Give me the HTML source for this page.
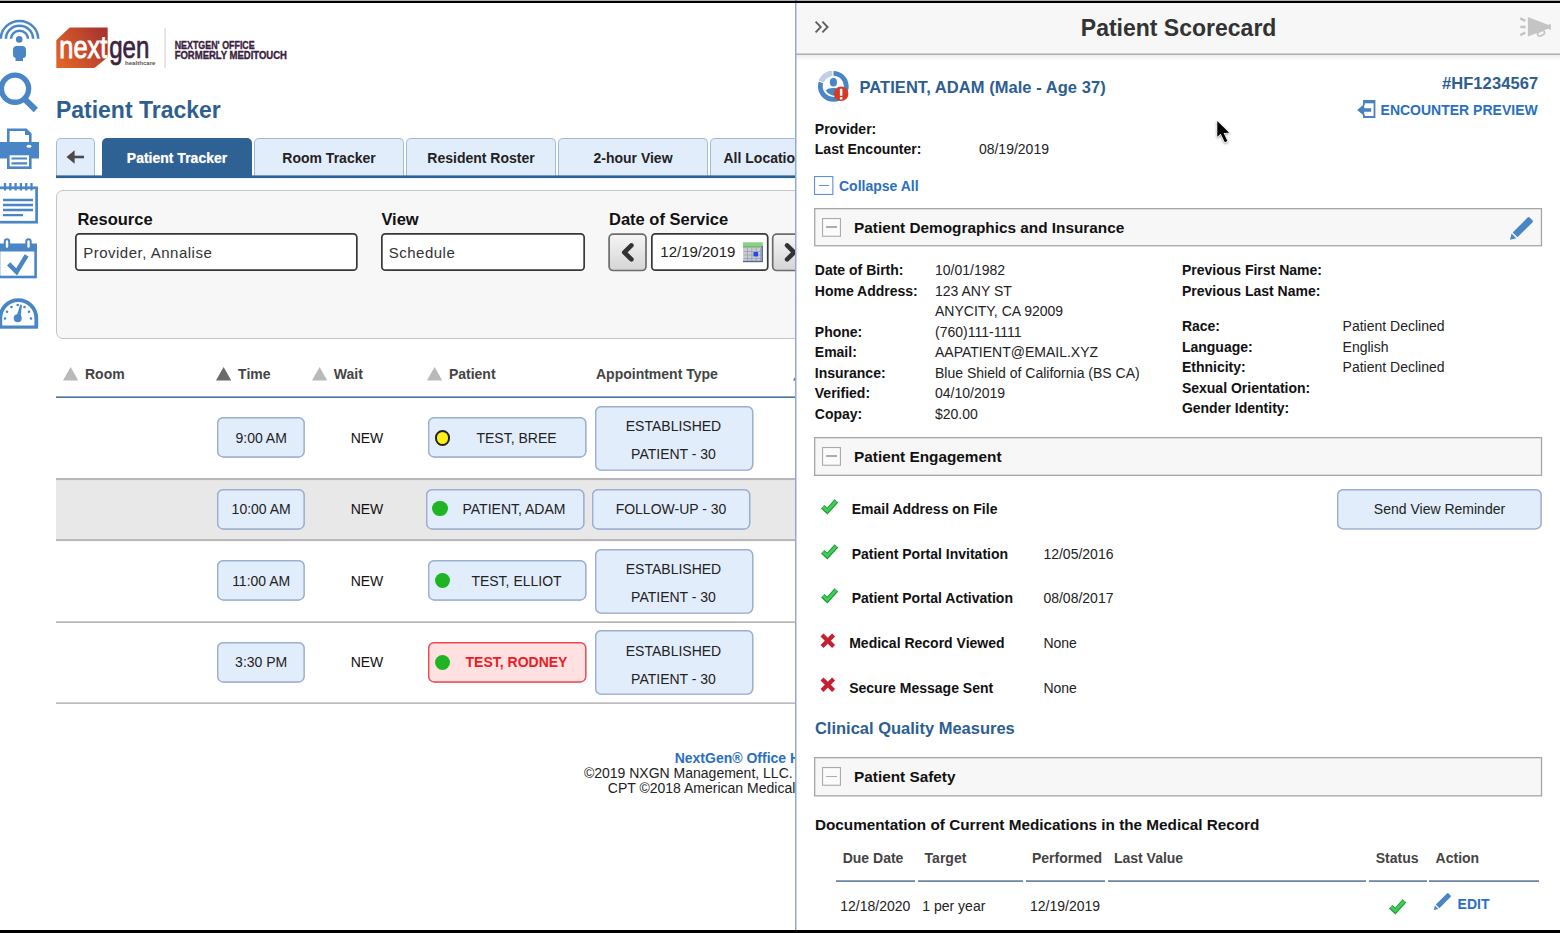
<!DOCTYPE html>
<html lang="en"><head><meta charset="utf-8"><title>Patient Tracker - Patient Scorecard</title>
<style>
html,body{margin:0;padding:0;}
body{width:1560px;height:933px;overflow:hidden;background:#fff;position:relative;font-family:"Liberation Sans",sans-serif;}
.t{position:absolute;white-space:nowrap;margin:0;padding:0;}
.b{position:absolute;box-sizing:border-box;}
svg{position:absolute;overflow:visible;}
#left{position:absolute;left:0;top:0;width:795px;height:933px;overflow:hidden;background:#fff;}
#right{position:absolute;left:795px;top:0;width:765px;height:933px;overflow:hidden;background:#fff;}
.btn{background:#e2edfb;border:1px solid #9fb4d2;border-radius:6px;box-shadow:0 1px 1px rgba(120,140,170,.35);}
.sec{background:#f7f7f7;border:1px solid #a6a6a6;box-shadow:0 0 0 .5px #b8b8b8;}
.mn{background:#fbfbfb;border:1px solid #aaa;}
</style></head><body>

<div id="left">
<svg width="42" height="340" style="left:0;top:0" viewBox="0 0 42 340">
<g fill="none" stroke="#4a86c6" stroke-width="2.5">
<path d="M0.800,38.800 A18.700,17.900 0 0 1 38.200,38.800"/>
<path d="M5.900,38.800 A13.600,13 0 0 1 33.100,38.800"/>
<path d="M11,38.800 A8.500,8.100 0 0 1 28,38.800"/>
</g>
<circle cx="19.2" cy="39.4" r="3.3" fill="#4a86c6"/>
<path d="M13,50 a4,4 0 0 1 4,-4 h5 a4,4 0 0 1 4,4 v5 a3,3 0 0 1 -3,3 v3 h-7.5 v-3 a3,3 0 0 1 -2.500,-3 z" fill="#4a86c6"/>
<circle cx="15" cy="88.7" r="13.6" fill="none" stroke="#4a86c6" stroke-width="5.4"/>
<path d="M24,98.500 L35.800,110" stroke="#4a86c6" stroke-width="6" fill="none"/>
<!-- printer -->
<path d="M8.300,142 V129.700 H26 L30.300,134 V142" fill="#fff" stroke="#4a86c6" stroke-width="2.600"/>
<path d="M25,128.400 V135 H31.500 Z" fill="#4a86c6"/>
<rect x="0" y="142" width="39" height="16.500" fill="#4a86c6"/>
<ellipse cx="29" cy="146.300" rx="2.600" ry="1.500" fill="#fff"/>
<rect x="8.300" y="154" width="22" height="13.700" fill="#fff" stroke="#4a86c6" stroke-width="2.600"/>
<path d="M11.500,158.500 H27 M11.500,163.300 H27" stroke="#4a86c6" stroke-width="2.200"/>
<!-- notepad -->
<rect x="-2" y="187.800" width="38.600" height="34.400" fill="#fff" stroke="#4a86c6" stroke-width="2.700"/>
<path d="M5,183 V190.500 M10.300,183 V190.500 M15.600,183 V190.500 M20.900,183 V190.500 M26.200,183 V190.500 M31.500,183 V190.500" stroke="#4a86c6" stroke-width="2.300"/>
<path d="M3,200 H33 M3,205 H33 M3,210 H33 M3,215.200 H23" stroke="#4a86c6" stroke-width="2.300"/>
<!-- calendar check -->
<rect x="-1" y="245" width="36.600" height="32" fill="#fff" stroke="#4a86c6" stroke-width="2.600"/>
<rect x="-1" y="243.700" width="37.900" height="7.800" fill="#4a86c6"/>
<rect x="4.800" y="239.300" width="4.400" height="9.500" rx="2.200" fill="#fff" stroke="#4a86c6" stroke-width="2"/>
<rect x="26.300" y="239.300" width="4.400" height="9.500" rx="2.200" fill="#fff" stroke="#4a86c6" stroke-width="2"/>
<path d="M8.600,263.800 L16.600,271.800 L26.600,255.300" fill="none" stroke="#4a86c6" stroke-width="4.500"/>
<!-- gauge -->
<path d="M0.300,327 V318.300 A18,18.200 0 0 1 36.300,318.300 V327" fill="none" stroke="#4a86c6" stroke-width="3.800"/>
<rect x="-1" y="325.500" width="39" height="3.200" fill="#4a86c6"/>
<circle cx="17.700" cy="318.300" r="4" fill="#4a86c6"/>
<path d="M16,318 L20.300,304.600 L22,305 L20.300,319 Z" fill="#4a86c6"/>
<g fill="#4a86c6"><circle cx="5" cy="318.500" r="1.300"/><circle cx="7" cy="311.800" r="1.300"/><circle cx="11.500" cy="307" r="1.300"/><circle cx="17.700" cy="305" r="1.300"/><circle cx="24.500" cy="307" r="1.300"/><circle cx="29" cy="311.800" r="1.300"/><circle cx="31" cy="318.500" r="1.300"/></g>
</svg>
<svg width="260" height="60" style="left:50px;top:20px" viewBox="50 20 260 60">
<defs><linearGradient id="lg" x1="0" y1="0.750" x2="1" y2="0.250"><stop offset="0" stop-color="#e06429"/><stop offset="0.500" stop-color="#c74c2c"/><stop offset="1" stop-color="#a7352f"/></linearGradient></defs>
<path d="M56.300,40.200 L69.600,27.600 H107.700 V57.200 L94.400,67.900 H56.300 Z" fill="url(#lg)"/>
<text x="59.300" y="58.300" font-family="Liberation Sans, sans-serif" font-size="32" fill="#fff" stroke="#fff" stroke-width=".9" textLength="48" lengthAdjust="spacingAndGlyphs">next</text>
<text x="109.200" y="58.300" font-family="Liberation Sans, sans-serif" font-size="32" fill="#3d2140" stroke="#3d2140" stroke-width=".7" textLength="40.200" lengthAdjust="spacingAndGlyphs">gen</text>
<text x="125" y="64.600" font-family="Liberation Sans, sans-serif" font-size="5" font-weight="bold" fill="#555" textLength="30.500" lengthAdjust="spacingAndGlyphs">healthcare</text>
<rect x="164.600" y="27.800" width="1" height="40" fill="#d0d0d0"/>
<text x="174.700" y="48.800" font-family="Liberation Sans, sans-serif" font-size="10.400" font-weight="bold" fill="#3a2140" stroke="#3a2140" stroke-width=".35" textLength="80" lengthAdjust="spacingAndGlyphs">NEXTGEN' OFFICE</text>
<text x="174.700" y="58.700" font-family="Liberation Sans, sans-serif" font-size="10.400" font-weight="bold" fill="#3a2140" stroke="#3a2140" stroke-width=".35" textLength="112.200" lengthAdjust="spacingAndGlyphs">FORMERLY MEDITOUCH</text>
</svg>
<div class="t" style="left:55.90px;top:95px;font-size:23px;line-height:30px;color:#2e5f90;font-weight:bold;">Patient Tracker</div>
<div class="b" style="left:56.00px;top:138.00px;width:38.50px;height:38.00px;background:#e2edfb;border:1px solid #a3b9d6;border-bottom:none;border-radius:5px 5px 0 0;"></div>
<div class="b" style="left:102.00px;top:137.60px;width:150.00px;height:38.40px;background:#2e6295;border-radius:5px 5px 0 0;"></div>
<div class="b" style="left:254.00px;top:138.00px;width:150.00px;height:38.00px;background:#e2edfb;border:1px solid #a3b9d6;border-bottom:none;border-radius:5px 5px 0 0;"></div>
<div class="b" style="left:406.00px;top:138.00px;width:150.00px;height:38.00px;background:#e2edfb;border:1px solid #a3b9d6;border-bottom:none;border-radius:5px 5px 0 0;"></div>
<div class="b" style="left:558.00px;top:138.00px;width:150.00px;height:38.00px;background:#e2edfb;border:1px solid #a3b9d6;border-bottom:none;border-radius:5px 5px 0 0;"></div>
<div class="b" style="left:710.00px;top:138.00px;width:150.00px;height:38.00px;background:#e2edfb;border:1px solid #a3b9d6;border-bottom:none;border-radius:5px 5px 0 0;"></div>
<svg width="800" height="4" style="left:0;top:175px" viewBox="0 175 800 4"><rect x="56" y="175.400" width="744" height="2.700" fill="#2e6295"/></svg>
<svg width="20" height="16" style="left:65px;top:149px" viewBox="65 149 20 16"><path d="M69,157 H84" stroke="#4a4a4a" stroke-width="2.600" fill="none"/><path d="M66.500,157 L74.600,150.200 V163.800 Z" fill="#4a4a4a"/></svg>
<div class="t" style="left:-23.00px;width:400px;text-align:center;top:148px;font-size:14px;line-height:20px;color:#fff;font-weight:bold;text-shadow:0 0 1px rgba(255,255,255,.6);">Patient Tracker</div>
<div class="t" style="left:129.00px;width:400px;text-align:center;top:148px;font-size:14px;line-height:20px;color:#222;font-weight:bold;">Room Tracker</div>
<div class="t" style="left:281.00px;width:400px;text-align:center;top:148px;font-size:14px;line-height:20px;color:#222;font-weight:bold;">Resident Roster</div>
<div class="t" style="left:433.00px;width:400px;text-align:center;top:148px;font-size:14px;line-height:20px;color:#222;font-weight:bold;">2-hour View</div>
<div class="t" style="left:723.50px;top:148px;font-size:14px;line-height:20px;color:#222;font-weight:bold;">All Locations</div>
<div class="b" style="left:56.00px;top:190.00px;width:844.00px;height:148.50px;background:#f7f7f7;border:1px solid #c4c4c4;border-radius:7px;"></div>
<div class="t" style="left:77.40px;top:209px;font-size:16.5px;line-height:20px;color:#111;font-weight:bold;">Resource</div>
<div class="t" style="left:381.40px;top:209px;font-size:16.5px;line-height:20px;color:#111;font-weight:bold;">View</div>
<div class="t" style="left:609.00px;top:209px;font-size:16.5px;line-height:20px;color:#111;font-weight:bold;">Date of Service</div>
<svg width="286.70" height="42.00" style="left:73.00px;top:231.30px;" viewBox="73.00 231.30 286.70 42.00"><rect x="75.85" y="234.15" width="281.00" height="36.30" rx="3.5" fill="#fff" stroke="#383838" stroke-width="1.7"/></svg>
<svg width="208.00" height="42.00" style="left:379.00px;top:231.30px;" viewBox="379.00 231.30 208.00 42.00"><rect x="381.85" y="234.15" width="202.30" height="36.30" rx="3.5" fill="#fff" stroke="#383838" stroke-width="1.7"/></svg>
<div class="t" style="left:83.20px;top:243px;font-size:15px;line-height:20px;color:#333;letter-spacing:.5px;">Provider, Annalise</div>
<div class="t" style="left:388.70px;top:243px;font-size:15px;line-height:20px;color:#333;letter-spacing:.5px;">Schedule</div>
<svg width="200" height="46" style="left:604px;top:230px" viewBox="604 230 200 46"><defs><linearGradient id="bg1" x1="0" y1="0" x2="0" y2="1"><stop offset="0" stop-color="#f6f6f6"/><stop offset="1" stop-color="#d4d4d4"/></linearGradient></defs><rect x="609.100" y="234.200" width="36.900" height="36.300" rx="4" fill="url(#bg1)" stroke="#6c6c6c" stroke-width="1.700"/><rect x="772.700" y="234.200" width="36.900" height="36.300" rx="4" fill="url(#bg1)" stroke="#6c6c6c" stroke-width="1.700"/></svg>
<svg width="121.60" height="42.00" style="left:648.60px;top:231.30px;" viewBox="648.60 231.30 121.60 42.00"><rect x="651.45" y="234.15" width="115.90" height="36.30" rx="3.5" fill="#fff" stroke="#383838" stroke-width="1.7"/></svg>
<svg width="200" height="50" style="left:600px;top:228px" viewBox="600 228 200 50"><path d="M631.400,245.400 L624.300,252.400 L631.400,259.400" fill="none" stroke="#333" stroke-width="4.600" stroke-linecap="round" stroke-linejoin="round"/><path d="M787.100,245.400 L794.200,252.400 L787.100,259.400" fill="none" stroke="#333" stroke-width="4.600" stroke-linecap="round" stroke-linejoin="round"/><g><rect x="743" y="242.400" width="19.800" height="19.600" fill="#c9ccd2"/><rect x="743" y="242.400" width="19.800" height="4.200" fill="#86d486"/><rect x="743" y="246.400" width="19.800" height="1" fill="#5aa85a"/><path d="M747.500,248 V261 M751.800,248 V261 M756.200,248 V261 M760.500,248 V261 M744,251.500 H762 M744,255 H762 M744,258.500 H762" stroke="#9aa0b0" stroke-width=".8"/><rect x="753.500" y="252" width="4.600" height="4.400" fill="#2448e8"/><rect x="743" y="260.800" width="19.800" height="1.400" fill="#56679c"/><rect x="761.600" y="246" width="1.300" height="16" fill="#56679c"/></g></svg>
<div class="t" style="left:660.30px;top:242px;font-size:15px;line-height:20px;color:#222;">12/19/2019</div>
<svg width="16" height="14" style="left:62.6px;top:367px" viewBox="0 0 16 14"><path d="M0,13.600 L7.600,0 L15.200,13.600 Z" fill="#b9b9b9"/></svg>
<div class="t" style="left:85.00px;top:364px;font-size:14px;line-height:20px;color:#444;font-weight:bold;">Room</div>
<svg width="16" height="14" style="left:216.2px;top:367px" viewBox="0 0 16 14"><path d="M0,13.600 L7.600,0 L15.200,13.600 Z" fill="#6a6a6a"/></svg>
<div class="t" style="left:238.10px;top:364px;font-size:14px;line-height:20px;color:#444;font-weight:bold;">Time</div>
<svg width="16" height="14" style="left:312.2px;top:367px" viewBox="0 0 16 14"><path d="M0,13.600 L7.600,0 L15.200,13.600 Z" fill="#b9b9b9"/></svg>
<div class="t" style="left:333.80px;top:364px;font-size:14px;line-height:20px;color:#444;font-weight:bold;">Wait</div>
<svg width="16" height="14" style="left:427px;top:367px" viewBox="0 0 16 14"><path d="M0,13.600 L7.600,0 L15.200,13.600 Z" fill="#b9b9b9"/></svg>
<div class="t" style="left:448.90px;top:364px;font-size:14px;line-height:20px;color:#444;font-weight:bold;">Patient</div>
<div class="t" style="left:596.00px;top:364px;font-size:14px;line-height:20px;color:#444;font-weight:bold;">Appointment Type</div>
<svg width="16" height="14" style="left:793px;top:367px" viewBox="0 0 16 14"><path d="M0,13.600 L7.600,0 L15.200,13.600 Z" fill="#6a6a6a"/></svg>
<div class="b" style="left:56.00px;top:396.00px;width:744.00px;height:2.00px;background:linear-gradient(#b9d0ea,#56789f 55%,#4a6a94);"></div>
<svg width="800" height="66" style="left:0;top:476px" viewBox="0 476 800 66"><rect x="56" y="479" width="744" height="61" fill="#e8e8e8"/><rect x="56" y="478" width="744" height="2.100" fill="#b6b6b6"/><rect x="56" y="539.100" width="744" height="2" fill="#b6b6b6"/></svg>
<div class="b" style="left:56.00px;top:621.00px;width:744.00px;height:2.00px;background:linear-gradient(#d6d6d6,#b8b8b8 60%,#b4b4b4);"></div>
<div class="b" style="left:56.00px;top:702.00px;width:744.00px;height:2.00px;background:linear-gradient(#dcdcdc,#bdbdbd 60%,#bababa);"></div>
<svg width="91.80" height="44.70" style="left:215.20px;top:415.30px;filter:drop-shadow(0 .8px .6px rgba(110,130,165,.45));" viewBox="215.20 415.30 91.80 44.70"><rect x="217.90" y="418.00" width="86.40" height="39.30" rx="5.5" fill="#e2edfb" stroke="#9bb0cf" stroke-width="1.4"/></svg>
<div class="t" style="left:61.20px;width:400px;text-align:center;top:428px;font-size:14px;line-height:20px;color:#222;">9:00 AM</div>
<div class="t" style="left:167.00px;width:400px;text-align:center;top:428px;font-size:14px;line-height:20px;color:#111;">NEW</div>
<svg width="162.50" height="44.70" style="left:426.00px;top:415.30px;filter:drop-shadow(0 .8px .6px rgba(110,130,165,.45));" viewBox="426.00 415.30 162.50 44.70"><rect x="428.70" y="418.00" width="157.10" height="39.30" rx="5.5" fill="#e2edfb" stroke="#9bb0cf" stroke-width="1.4"/></svg>
<div class="b" style="left:434.90px;top:430.10px;width:15.600px;height:15.600px;border-radius:50%;background:#ffef1a;border:2px solid #222;"></div>
<div class="t" style="left:316.50px;width:400px;text-align:center;top:428px;font-size:14px;line-height:20px;color:#222;">TEST, BREE</div>
<svg width="162.40" height="68.80" style="left:592.50px;top:403.70px;filter:drop-shadow(0 .8px .6px rgba(110,130,165,.45));" viewBox="592.50 403.70 162.40 68.80"><rect x="595.20" y="406.40" width="157.00" height="63.40" rx="5.5" fill="#e2edfb" stroke="#9bb0cf" stroke-width="1.4"/></svg>
<div class="t" style="left:473.50px;width:400px;text-align:center;top:416px;font-size:14px;line-height:20px;color:#222;">ESTABLISHED</div>
<div class="t" style="left:473.50px;width:400px;text-align:center;top:444px;font-size:14px;line-height:20px;color:#222;">PATIENT - 30</div>
<svg width="91.80" height="44.70" style="left:215.20px;top:486.50px;filter:drop-shadow(0 .8px .6px rgba(110,130,165,.45));" viewBox="215.20 486.50 91.80 44.70"><rect x="217.90" y="489.20" width="86.40" height="39.30" rx="5.5" fill="#e2edfb" stroke="#9bb0cf" stroke-width="1.4"/></svg>
<div class="t" style="left:61.20px;width:400px;text-align:center;top:499px;font-size:14px;line-height:20px;color:#222;">10:00 AM</div>
<div class="t" style="left:167.00px;width:400px;text-align:center;top:499px;font-size:14px;line-height:20px;color:#111;">NEW</div>
<svg width="162.50" height="44.70" style="left:423.50px;top:486.50px;filter:drop-shadow(0 .8px .6px rgba(110,130,165,.45));" viewBox="423.50 486.50 162.50 44.70"><rect x="426.20" y="489.20" width="157.10" height="39.30" rx="5.5" fill="#e2edfb" stroke="#9bb0cf" stroke-width="1.4"/></svg>
<div class="b" style="left:432.40px;top:501.30px;width:15.200px;height:15.200px;border-radius:50%;background:#1fb522;"></div>
<div class="t" style="left:314.00px;width:400px;text-align:center;top:499px;font-size:14px;line-height:20px;color:#222;">PATIENT, ADAM</div>
<svg width="162.40" height="44.70" style="left:590.00px;top:486.50px;filter:drop-shadow(0 .8px .6px rgba(110,130,165,.45));" viewBox="590.00 486.50 162.40 44.70"><rect x="592.70" y="489.20" width="157.00" height="39.30" rx="5.5" fill="#e2edfb" stroke="#9bb0cf" stroke-width="1.4"/></svg>
<div class="t" style="left:471.00px;width:400px;text-align:center;top:499px;font-size:14px;line-height:20px;color:#222;">FOLLOW-UP - 30</div>
<svg width="91.80" height="44.70" style="left:215.20px;top:558.20px;filter:drop-shadow(0 .8px .6px rgba(110,130,165,.45));" viewBox="215.20 558.20 91.80 44.70"><rect x="217.90" y="560.90" width="86.40" height="39.30" rx="5.5" fill="#e2edfb" stroke="#9bb0cf" stroke-width="1.4"/></svg>
<div class="t" style="left:61.20px;width:400px;text-align:center;top:571px;font-size:14px;line-height:20px;color:#222;">11:00 AM</div>
<div class="t" style="left:167.00px;width:400px;text-align:center;top:571px;font-size:14px;line-height:20px;color:#111;">NEW</div>
<svg width="162.50" height="44.70" style="left:426.00px;top:558.20px;filter:drop-shadow(0 .8px .6px rgba(110,130,165,.45));" viewBox="426.00 558.20 162.50 44.70"><rect x="428.70" y="560.90" width="157.10" height="39.30" rx="5.5" fill="#e2edfb" stroke="#9bb0cf" stroke-width="1.4"/></svg>
<div class="b" style="left:434.90px;top:573.00px;width:15.200px;height:15.200px;border-radius:50%;background:#1fb522;"></div>
<div class="t" style="left:316.50px;width:400px;text-align:center;top:571px;font-size:14px;line-height:20px;color:#222;">TEST, ELLIOT</div>
<svg width="162.40" height="68.80" style="left:592.50px;top:546.60px;filter:drop-shadow(0 .8px .6px rgba(110,130,165,.45));" viewBox="592.50 546.60 162.40 68.80"><rect x="595.20" y="549.30" width="157.00" height="63.40" rx="5.5" fill="#e2edfb" stroke="#9bb0cf" stroke-width="1.4"/></svg>
<div class="t" style="left:473.50px;width:400px;text-align:center;top:559px;font-size:14px;line-height:20px;color:#222;">ESTABLISHED</div>
<div class="t" style="left:473.50px;width:400px;text-align:center;top:587px;font-size:14px;line-height:20px;color:#222;">PATIENT - 30</div>
<svg width="91.80" height="44.70" style="left:215.20px;top:640.00px;filter:drop-shadow(0 .8px .6px rgba(110,130,165,.45));" viewBox="215.20 640.00 91.80 44.70"><rect x="217.90" y="642.70" width="86.40" height="39.30" rx="5.5" fill="#e2edfb" stroke="#9bb0cf" stroke-width="1.4"/></svg>
<div class="t" style="left:61.20px;width:400px;text-align:center;top:652px;font-size:14px;line-height:20px;color:#222;">3:30 PM</div>
<div class="t" style="left:167.00px;width:400px;text-align:center;top:652px;font-size:14px;line-height:20px;color:#111;">NEW</div>
<svg width="162.50" height="44.70" style="left:426.00px;top:640.00px;filter:drop-shadow(0 .8px .6px rgba(110,130,165,.45));" viewBox="426.00 640.00 162.50 44.70"><rect x="428.70" y="642.70" width="157.10" height="39.30" rx="5.5" fill="#ffe1e1" stroke="#f2474d" stroke-width="1.4"/></svg>
<div class="b" style="left:434.90px;top:654.80px;width:15.200px;height:15.200px;border-radius:50%;background:#1fb522;"></div>
<div class="t" style="left:316.50px;width:400px;text-align:center;top:652px;font-size:14px;line-height:20px;color:#ea1c24;font-weight:bold;">TEST, RODNEY</div>
<svg width="162.40" height="68.80" style="left:592.50px;top:628.40px;filter:drop-shadow(0 .8px .6px rgba(110,130,165,.45));" viewBox="592.50 628.40 162.40 68.80"><rect x="595.20" y="631.10" width="157.00" height="63.40" rx="5.5" fill="#e2edfb" stroke="#9bb0cf" stroke-width="1.4"/></svg>
<div class="t" style="left:473.50px;width:400px;text-align:center;top:641px;font-size:14px;line-height:20px;color:#222;">ESTABLISHED</div>
<div class="t" style="left:473.50px;width:400px;text-align:center;top:669px;font-size:14px;line-height:20px;color:#222;">PATIENT - 30</div>
<div class="t" style="left:674.70px;top:748px;font-size:14px;line-height:20px;color:#2a6fc0;font-weight:bold;">NextGen&reg; Office Help</div>
<div class="t" style="left:583.90px;top:763px;font-size:14px;line-height:20px;color:#222;">&copy;2019 NXGN Management, LLC. All rights reserved.</div>
<div class="t" style="left:607.80px;top:778px;font-size:14px;line-height:20px;color:#222;">CPT &copy;2018 American Medical Association.</div>
</div>
<div id="right" style="left:0;width:1560px;clip-path:inset(0 0 0 795px);background:transparent;">
<div class="b" style="left:795.00px;top:0.00px;width:765.00px;height:933.00px;background:#fff;"></div>
<div class="b" style="left:788.00px;top:0.00px;width:7.00px;height:933.00px;background:linear-gradient(90deg,rgba(190,205,230,0),rgba(170,190,222,.6));"></div>
<div class="b" style="left:795.00px;top:3.00px;width:765.00px;height:50.20px;background:#f7f7f7;"></div>
<svg width="765" height="4" style="left:795px;top:52px" viewBox="795 52 765 4"><rect x="795" y="53.400" width="765" height="1.600" fill="#b0b0b0"/></svg>
<div class="b" style="left:795.00px;top:55.00px;width:765.00px;height:6.00px;background:linear-gradient(rgba(0,0,0,.07),rgba(0,0,0,0));"></div>
<svg width="4" height="933" style="left:794px;top:0" viewBox="794 0 4 933"><rect x="794.600" y="0" width="1.900" height="933" fill="#93aad0"/></svg>
<svg width="16" height="14" style="left:814px;top:20px" viewBox="814 20 16 14"><path d="M815.600,21.600 L820.800,27 L815.600,32.400 M822.400,21.600 L827.600,27 L822.400,32.400" fill="none" stroke="#606060" stroke-width="1.900"/></svg>
<div class="t" style="left:1080.80px;top:13px;font-size:23px;line-height:30px;color:#333;font-weight:bold;">Patient Scorecard</div>
<svg width="36" height="26" style="left:1518px;top:14px" viewBox="1518 14 36 26"><g fill="#c4c4c4"><path d="M1527.900,17 L1548.600,25 V24.200 h2.300 V29.400 h-2.300 V28.600 L1527.900,36.400 Z"/></g><g stroke="#c4c4c4" stroke-width="2.500" fill="none"><path d="M1520.300,18.300 L1525.300,20.900 M1520.300,26.900 H1525.600 M1520.300,35.200 L1525.300,32.600"/></g><rect x="1537.300" y="31.200" width="7.400" height="4.200" rx="2.100" fill="none" stroke="#c4c4c4" stroke-width="1.700" transform="rotate(-27 1541 33.300)"/></svg>
<svg width="36" height="36" style="left:816px;top:68px" viewBox="816 68 36 36"><circle cx="833.300" cy="86.300" r="13" fill="none" stroke="#4a86c6" stroke-width="4.800"/><path d="M821.280,81.320 A13,13 0 0 1 832.400,73.330" fill="none" stroke="#c3cfe6" stroke-width="5"/><path d="M817.600,80.600 L824.400,83 M832.700,70 L833,76.800" stroke="#fff" stroke-width="1.300"/><ellipse cx="833.400" cy="82.200" rx="3.600" ry="4.300" fill="#4a86c6"/><path d="M825.800,90.500 C828,88 833,87.600 836.500,88.400 L838,95.500 C833,96.500 828,94.500 825.800,90.500 Z" fill="#4a86c6"/><circle cx="841.100" cy="93.800" r="7.300" fill="#d63a24"/><rect x="839.900" y="88.800" width="2.500" height="7" rx=".6" fill="#fff"/><rect x="839.900" y="97" width="2.500" height="2.400" rx=".6" fill="#fff"/></svg>
<div class="t" style="left:859.50px;top:77px;font-size:16.5px;line-height:20px;color:#2d5e90;font-weight:bold;letter-spacing:.05px;">PATIENT, ADAM (Male - Age 37)</div>
<div class="t" style="left:1038.30px;width:500px;text-align:right;top:73px;font-size:16.5px;line-height:20px;color:#2d5e90;font-weight:bold;letter-spacing:.1px;">#HF1234567</div>
<div class="t" style="left:1037.70px;width:500px;text-align:right;top:100px;font-size:14px;line-height:20px;color:#2a6fc0;font-weight:bold;">ENCOUNTER PREVIEW</div>
<svg width="22" height="22" style="left:1356px;top:98px" viewBox="1356 98 22 22"><path d="M1363.900,105 V101 H1374.500 V117 H1363.900 V114.500" fill="none" stroke="#4a7fc0" stroke-width="1.800"/><path d="M1363.900,102 H1374.500" stroke="#4a7fc0" stroke-width="2.600"/><path d="M1357.200,110 L1364.200,104 V108.200 H1371.200 V111.800 H1364.200 V116 Z" fill="#4a7fc0"/></svg>
<div class="t" style="left:814.80px;top:119px;font-size:14px;line-height:20px;color:#111;font-weight:bold;">Provider:</div>
<div class="t" style="left:814.80px;top:139px;font-size:14px;line-height:20px;color:#111;font-weight:bold;">Last Encounter:</div>
<div class="t" style="left:978.90px;top:139px;font-size:14px;line-height:20px;color:#222;">08/19/2019</div>
<svg width="24" height="32" style="left:1212px;top:116px;filter:drop-shadow(0.5px 1.2px 1px rgba(0,0,0,.4))" viewBox="1212 116 24 32"><path d="M1217.300,121 V136.700 L1220.700,133.700 L1224.800,142.300 L1227.400,141.100 L1223.600,133 L1229.200,132.700 Z" fill="#000" stroke="#fff" stroke-width="1.300" stroke-linejoin="round" paint-order="stroke"/></svg>
<svg width="23.40" height="23.00" style="left:812.00px;top:173.90px;" viewBox="812.00 173.90 23.40 23.00"><rect x="814.55" y="176.45" width="18.30" height="17.90" rx="0" fill="#fff" stroke="#5f92d2" stroke-width="1.1"/></svg>
<div class="b" style="left:818.50px;top:184.80px;width:10.50px;height:1.20px;background:#5f92d2;"></div>
<div class="t" style="left:839.00px;top:176px;font-size:14px;line-height:20px;color:#2a6fc0;font-weight:bold;">Collapse All</div>
<svg width="732.20" height="42.40" style="left:811.60px;top:205.80px;" viewBox="811.60 205.80 732.20 42.40"><rect x="814.25" y="208.45" width="726.90" height="37.10" rx="0" fill="#f7f7f7" stroke="#a6a6a6" stroke-width="1.3"/></svg>
<svg width="23.00" height="22.80" style="left:819.80px;top:215.60px;" viewBox="819.80 215.60 23.00 22.80"><rect x="822.35" y="218.15" width="17.90" height="17.70" rx="0" fill="#fbfbfb" stroke="#ababab" stroke-width="1.1"/></svg>
<div class="b" style="left:826.00px;top:226.40px;width:10.60px;height:1.20px;background:#adadad;"></div>
<div class="t" style="left:854.00px;top:218px;font-size:15.35px;line-height:20px;color:#111;font-weight:bold;">Patient Demographics and Insurance</div>
<svg width="26.0" height="24.0" style="left:1508.6px;top:216.8px" viewBox="0 0 26 24"><path d="M1,22.800 L2.600,16.600 L7.200,21.200 Z" fill="#4a86c6"/><path d="M3.700,15.400 L18.600,0.600 a1.500,1.500 0 0 1 2.100,0 L23.400,3.300 a1.500,1.500 0 0 1 0,2.100 L8.500,20.200 Z" fill="#4a86c6"/></svg>
<div class="t" style="left:814.80px;top:260px;font-size:14px;line-height:20px;color:#111;font-weight:bold;">Date of Birth:</div>
<div class="t" style="left:935.00px;top:260px;font-size:14px;line-height:20px;color:#222;">10/01/1982</div>
<div class="t" style="left:814.80px;top:281px;font-size:14px;line-height:20px;color:#111;font-weight:bold;">Home Address:</div>
<div class="t" style="left:935.00px;top:281px;font-size:14px;line-height:20px;color:#222;">123 ANY ST</div>
<div class="t" style="left:935.00px;top:301px;font-size:14px;line-height:20px;color:#222;">ANYCITY, CA 92009</div>
<div class="t" style="left:814.80px;top:322px;font-size:14px;line-height:20px;color:#111;font-weight:bold;">Phone:</div>
<div class="t" style="left:935.00px;top:322px;font-size:14px;line-height:20px;color:#222;">(760)111-1111</div>
<div class="t" style="left:814.80px;top:342px;font-size:14px;line-height:20px;color:#111;font-weight:bold;">Email:</div>
<div class="t" style="left:935.00px;top:342px;font-size:14px;line-height:20px;color:#222;">AAPATIENT@EMAIL.XYZ</div>
<div class="t" style="left:814.80px;top:363px;font-size:14px;line-height:20px;color:#111;font-weight:bold;">Insurance:</div>
<div class="t" style="left:935.00px;top:363px;font-size:14px;line-height:20px;color:#222;">Blue Shield of California (BS CA)</div>
<div class="t" style="left:814.80px;top:383px;font-size:14px;line-height:20px;color:#111;font-weight:bold;">Verified:</div>
<div class="t" style="left:935.00px;top:383px;font-size:14px;line-height:20px;color:#222;">04/10/2019</div>
<div class="t" style="left:814.80px;top:404px;font-size:14px;line-height:20px;color:#111;font-weight:bold;">Copay:</div>
<div class="t" style="left:935.00px;top:404px;font-size:14px;line-height:20px;color:#222;">$20.00</div>
<div class="t" style="left:1181.90px;top:260px;font-size:14px;line-height:20px;color:#111;font-weight:bold;">Previous First Name:</div>
<div class="t" style="left:1181.90px;top:281px;font-size:14px;line-height:20px;color:#111;font-weight:bold;">Previous Last Name:</div>
<div class="t" style="left:1181.90px;top:316px;font-size:14px;line-height:20px;color:#111;font-weight:bold;">Race:</div>
<div class="t" style="left:1342.60px;top:316px;font-size:14px;line-height:20px;color:#222;">Patient Declined</div>
<div class="t" style="left:1181.90px;top:337px;font-size:14px;line-height:20px;color:#111;font-weight:bold;">Language:</div>
<div class="t" style="left:1342.60px;top:337px;font-size:14px;line-height:20px;color:#222;">English</div>
<div class="t" style="left:1181.90px;top:357px;font-size:14px;line-height:20px;color:#111;font-weight:bold;">Ethnicity:</div>
<div class="t" style="left:1342.60px;top:357px;font-size:14px;line-height:20px;color:#222;">Patient Declined</div>
<div class="t" style="left:1181.90px;top:378px;font-size:14px;line-height:20px;color:#111;font-weight:bold;">Sexual Orientation:</div>
<div class="t" style="left:1181.90px;top:398px;font-size:14px;line-height:20px;color:#111;font-weight:bold;">Gender Identity:</div>
<svg width="732.20" height="43.00" style="left:811.60px;top:434.50px;" viewBox="811.60 434.50 732.20 43.00"><rect x="814.25" y="437.15" width="726.90" height="37.70" rx="0" fill="#f7f7f7" stroke="#a6a6a6" stroke-width="1.3"/></svg>
<svg width="23.00" height="22.80" style="left:819.80px;top:444.60px;" viewBox="819.80 444.60 23.00 22.80"><rect x="822.35" y="447.15" width="17.90" height="17.70" rx="0" fill="#fbfbfb" stroke="#ababab" stroke-width="1.1"/></svg>
<div class="b" style="left:826.00px;top:455.40px;width:10.60px;height:1.20px;background:#adadad;"></div>
<div class="t" style="left:854.00px;top:447px;font-size:15.35px;line-height:20px;color:#111;font-weight:bold;">Patient Engagement</div>
<svg width="22" height="18" style="left:818.6px;top:497.1px" viewBox="0 0 22 18"><path d="M3.700,9.700 L8.300,14.100 L17.400,3.900" fill="none" stroke="#1f9a36" stroke-width="4.900" stroke-linejoin="miter" stroke-linecap="butt"/><path d="M4,9.800 L8.300,13.900 L17.100,4.100" fill="none" stroke="#3fcf58" stroke-width="2.700" stroke-linejoin="miter" stroke-linecap="butt"/></svg>
<div class="t" style="left:851.70px;top:499px;font-size:14px;line-height:20px;color:#111;font-weight:bold;">Email Address on File</div>
<svg width="22" height="18" style="left:818.6px;top:541.8px" viewBox="0 0 22 18"><path d="M3.700,9.700 L8.300,14.100 L17.400,3.900" fill="none" stroke="#1f9a36" stroke-width="4.900" stroke-linejoin="miter" stroke-linecap="butt"/><path d="M4,9.800 L8.300,13.900 L17.100,4.100" fill="none" stroke="#3fcf58" stroke-width="2.700" stroke-linejoin="miter" stroke-linecap="butt"/></svg>
<div class="t" style="left:851.70px;top:544px;font-size:14px;line-height:20px;color:#111;font-weight:bold;">Patient Portal Invitation</div>
<div class="t" style="left:1043.40px;top:544px;font-size:14px;line-height:20px;color:#222;">12/05/2016</div>
<svg width="22" height="18" style="left:818.6px;top:586.2px" viewBox="0 0 22 18"><path d="M3.700,9.700 L8.300,14.100 L17.400,3.900" fill="none" stroke="#1f9a36" stroke-width="4.900" stroke-linejoin="miter" stroke-linecap="butt"/><path d="M4,9.800 L8.300,13.900 L17.100,4.100" fill="none" stroke="#3fcf58" stroke-width="2.700" stroke-linejoin="miter" stroke-linecap="butt"/></svg>
<div class="t" style="left:851.70px;top:588px;font-size:14px;line-height:20px;color:#111;font-weight:bold;">Patient Portal Activation</div>
<div class="t" style="left:1043.40px;top:588px;font-size:14px;line-height:20px;color:#222;">08/08/2017</div>
<svg width="18" height="18" style="left:819.3px;top:631.5px" viewBox="0 0 18 18"><path d="M3,3 L14.600,14.600 M14.600,3 L3,14.600" fill="none" stroke="#c4202f" stroke-width="4.200"/></svg>
<div class="t" style="left:849.20px;top:633px;font-size:14px;line-height:20px;color:#111;font-weight:bold;">Medical Record Viewed</div>
<div class="t" style="left:1043.40px;top:633px;font-size:14px;line-height:20px;color:#222;">None</div>
<svg width="18" height="18" style="left:819.3px;top:676.1999999999999px" viewBox="0 0 18 18"><path d="M3,3 L14.600,14.600 M14.600,3 L3,14.600" fill="none" stroke="#c4202f" stroke-width="4.200"/></svg>
<div class="t" style="left:849.20px;top:678px;font-size:14px;line-height:20px;color:#111;font-weight:bold;">Secure Message Sent</div>
<div class="t" style="left:1043.40px;top:678px;font-size:14px;line-height:20px;color:#222;">None</div>
<svg width="208.80" height="44.60" style="left:1334.80px;top:486.50px;filter:drop-shadow(0 .8px .6px rgba(110,130,165,.45));" viewBox="1334.80 486.50 208.80 44.60"><rect x="1337.50" y="489.20" width="203.40" height="39.20" rx="5.5" fill="#e2edfb" stroke="#9bb0cf" stroke-width="1.4"/></svg>
<div class="t" style="left:1239.50px;width:400px;text-align:center;top:499px;font-size:14px;line-height:20px;color:#222;">Send View Reminder</div>
<div class="t" style="left:814.90px;top:718px;font-size:16.5px;line-height:20px;color:#2d5e90;font-weight:bold;">Clinical Quality Measures</div>
<svg width="732.20" height="43.50" style="left:811.60px;top:754.50px;" viewBox="811.60 754.50 732.20 43.50"><rect x="814.25" y="757.15" width="726.90" height="38.20" rx="0" fill="#f7f7f7" stroke="#a6a6a6" stroke-width="1.3"/></svg>
<svg width="23.00" height="22.80" style="left:819.80px;top:764.85px;" viewBox="819.80 764.85 23.00 22.80"><rect x="822.35" y="767.40" width="17.90" height="17.70" rx="0" fill="#fbfbfb" stroke="#ababab" stroke-width="1.1"/></svg>
<div class="b" style="left:826.00px;top:775.65px;width:10.60px;height:1.20px;background:#adadad;"></div>
<div class="t" style="left:854.00px;top:767px;font-size:15.35px;line-height:20px;color:#111;font-weight:bold;">Patient Safety</div>
<div class="t" style="left:814.90px;top:815px;font-size:15.3px;line-height:20px;color:#111;font-weight:bold;">Documentation of Current Medications in the Medical Record</div>
<div class="t" style="left:842.70px;top:848px;font-size:14px;line-height:20px;color:#444;font-weight:bold;">Due Date</div>
<div class="t" style="left:924.60px;top:848px;font-size:14px;line-height:20px;color:#444;font-weight:bold;">Target</div>
<div class="t" style="left:1032.00px;top:848px;font-size:14px;line-height:20px;color:#444;font-weight:bold;">Performed</div>
<div class="t" style="left:1113.90px;top:848px;font-size:14px;line-height:20px;color:#444;font-weight:bold;">Last Value</div>
<div class="t" style="left:1375.70px;top:848px;font-size:14px;line-height:20px;color:#444;font-weight:bold;">Status</div>
<div class="t" style="left:1435.60px;top:848px;font-size:14px;line-height:20px;color:#444;font-weight:bold;">Action</div>
<div class="b" style="left:836.00px;top:880.00px;width:79.20px;height:2.00px;background:linear-gradient(#a3b4c9,#718aa6 55%,#6c86a3);"></div>
<div class="b" style="left:917.90px;top:880.00px;width:104.70px;height:2.00px;background:linear-gradient(#a3b4c9,#718aa6 55%,#6c86a3);"></div>
<div class="b" style="left:1025.60px;top:880.00px;width:79.00px;height:2.00px;background:linear-gradient(#a3b4c9,#718aa6 55%,#6c86a3);"></div>
<div class="b" style="left:1107.50px;top:880.00px;width:258.80px;height:2.00px;background:linear-gradient(#a3b4c9,#718aa6 55%,#6c86a3);"></div>
<div class="b" style="left:1369.20px;top:880.00px;width:57.70px;height:2.00px;background:linear-gradient(#a3b4c9,#718aa6 55%,#6c86a3);"></div>
<div class="b" style="left:1429.20px;top:880.00px;width:109.70px;height:2.00px;background:linear-gradient(#a3b4c9,#718aa6 55%,#6c86a3);"></div>
<div class="t" style="left:840.30px;top:896px;font-size:14px;line-height:20px;color:#222;">12/18/2020</div>
<div class="t" style="left:922.30px;top:896px;font-size:14px;line-height:20px;color:#222;">1 per year</div>
<div class="t" style="left:1030.00px;top:896px;font-size:14px;line-height:20px;color:#222;">12/19/2019</div>
<svg width="22" height="18" style="left:1386.8px;top:896.5px" viewBox="0 0 22 18"><path d="M3.700,9.700 L8.300,14.100 L17.400,3.900" fill="none" stroke="#1f9a36" stroke-width="4.900" stroke-linejoin="miter" stroke-linecap="butt"/><path d="M4,9.800 L8.300,13.900 L17.100,4.100" fill="none" stroke="#3fcf58" stroke-width="2.700" stroke-linejoin="miter" stroke-linecap="butt"/></svg>
<svg width="19.5" height="18.0" style="left:1433.4px;top:893.4px" viewBox="0 0 26 24"><path d="M1,22.800 L2.600,16.600 L7.200,21.200 Z" fill="#4a86c6"/><path d="M3.700,15.400 L18.600,0.600 a1.500,1.500 0 0 1 2.100,0 L23.400,3.300 a1.500,1.500 0 0 1 0,2.100 L8.500,20.200 Z" fill="#4a86c6"/></svg>
<div class="t" style="left:1457.60px;top:894px;font-size:14px;line-height:20px;color:#2a6fc0;font-weight:bold;">EDIT</div>
</div>
<svg width="1560" height="4" style="left:0;top:0" viewBox="0 0 1560 4"><rect x="0" y="0.700" width="1560" height="2.300" fill="#000"/></svg>
<div class="b" style="left:0;top:929.500px;width:1560px;height:4px;background:#000;"></div>
</body></html>
